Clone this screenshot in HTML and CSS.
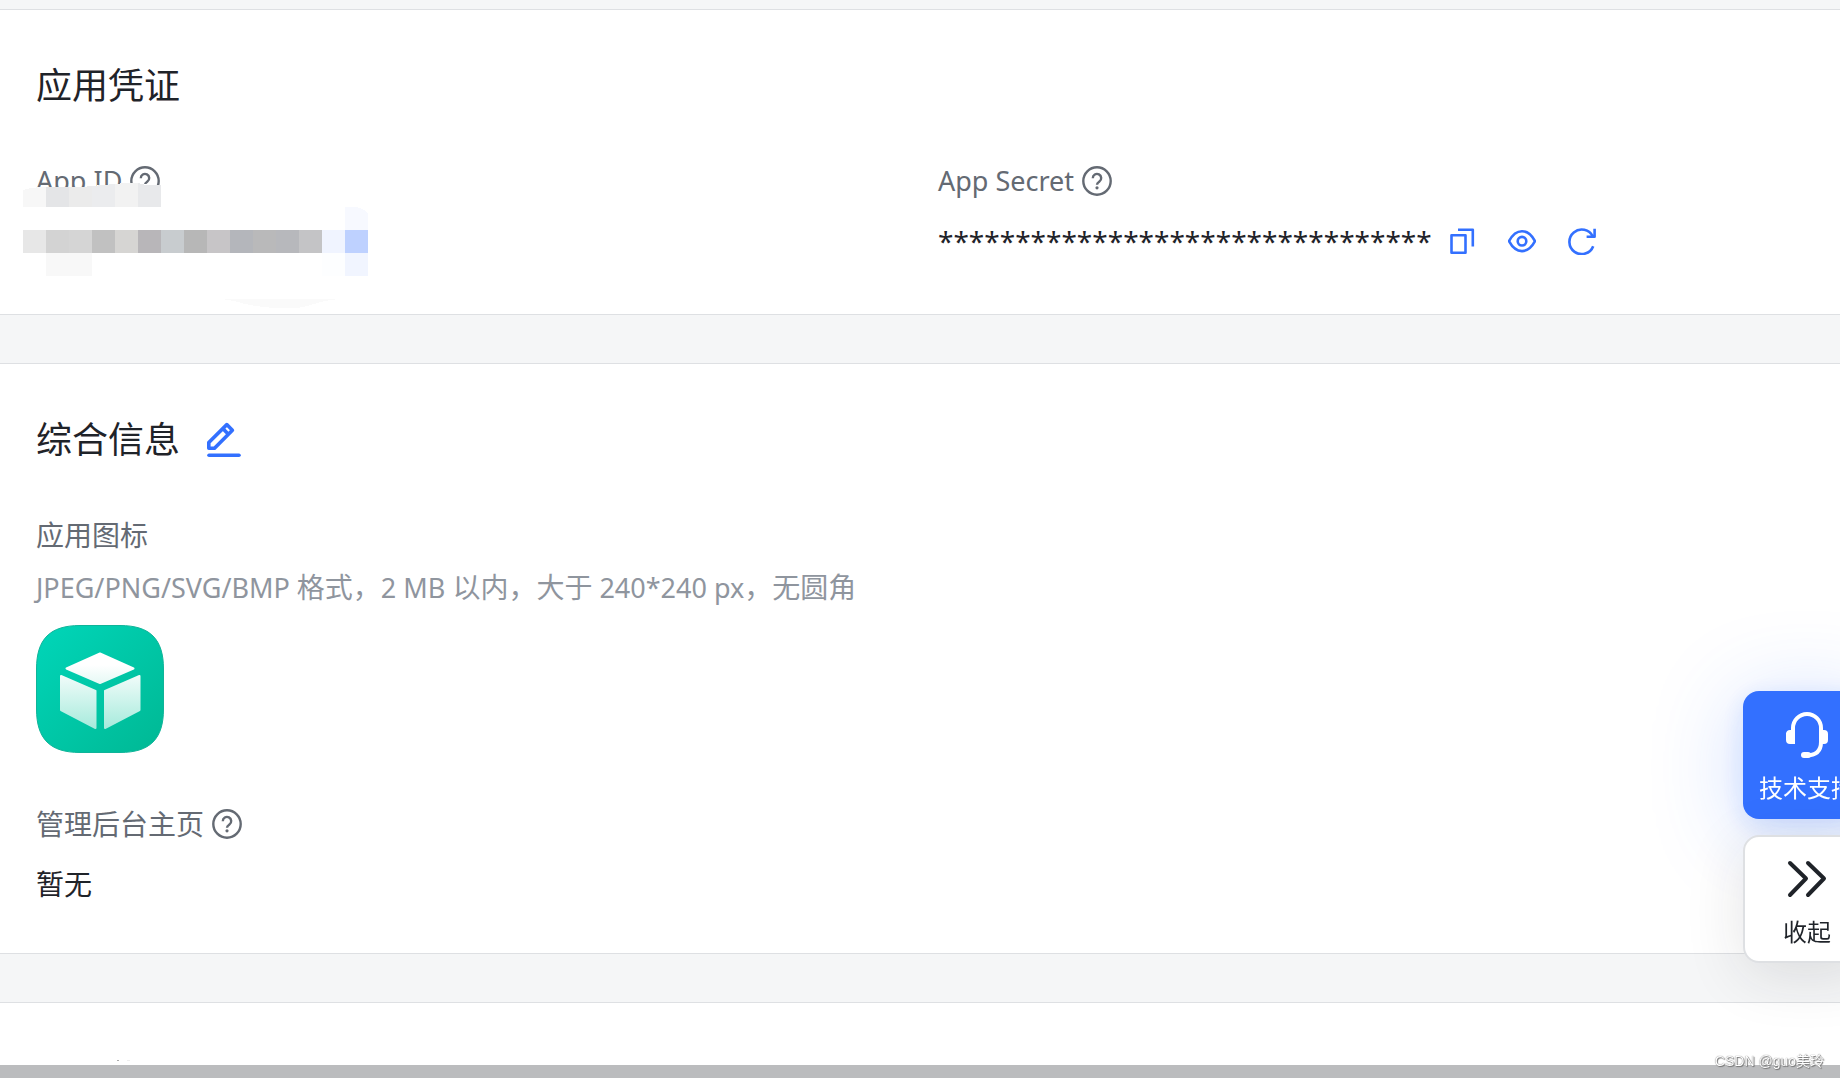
FILE: index.html
```html
<!DOCTYPE html>
<html lang="zh-CN">
<head>
    <meta charset="UTF-8">
    <meta name="viewport" content="width=device-width, initial-scale=1.0">
    <title>应用凭证</title>
    <link rel="stylesheet" href="styles.css">
</head>
<body>
    <svg width="0" height="0" class="sprite" aria-hidden="true">
        <symbol id="icon-help" viewBox="0 0 30 30">
            <circle cx="15" cy="15" r="13.7" fill="none" stroke="currentColor" stroke-width="2.4"/>
            <path d="M10.800 12.200a4.200 4.200 0 1 1 6.600 3.400c-1.500 1-2.400 1.500-2.400 3.200" fill="none" stroke="currentColor" stroke-width="2.400"/>
            <circle cx="15" cy="21.800" r="1.600" fill="currentColor"/>
        </symbol>
    </svg>

    <main class="page">
        <section class="card">
            <h2 class="card-title">应用凭证</h2>
            <div class="columns">
                <div class="field">
                    <div class="label"><span class="latin">App ID</span> <svg class="help"><use href="#icon-help"/></svg></div>
                    <!-- masked id -->
                    <svg class="mosaic" width="345" height="125" viewBox="23 183 345 125" shape-rendering="crispEdges" aria-hidden="true">
                        <path fill="#fff" d="M23 190L46 187H80L115 184 130 183 161 185V222H23z"/>
                        <path fill="#f7f7f7" d="M23 190Q32 187 46 187V207H23z"/>
                        <path fill="#e4e5e7" d="M46 187h23v20H46z"/>
                        <path fill="#ebebeb" d="M69 187h12l11-1v21H69z"/>
                        <path fill="#ebecee" d="M92 186l23-2v23H92z"/>
                        <path fill="#f2f2f2" d="M115 184l10-1h13v24h-23z"/>
                        <path fill="#e8e9eb" d="M138 183l8 2h15v22h-23z"/>
                        <path fill="#f7f9ff" d="M345 207h11q8 1 12 7v16h-23z"/>
                        <path fill="#e7e7e7" d="M23 230h23v23H23z"/>
                        <path fill="#d3d3d3" d="M46 230h23v23H46z"/>
                        <path fill="#d5d5d5" d="M69 230h23v23H69z"/>
                        <path fill="#c1c1c1" d="M92 230h23v23H92z"/>
                        <path fill="#d6d5d3" d="M115 230h23v23h-23z"/>
                        <path fill="#b8b6b9" d="M138 230h23v23h-23z"/>
                        <path fill="#c8cccf" d="M161 230h23v23h-23z"/>
                        <path fill="#b7b7b7" d="M184 230h23v23h-23z"/>
                        <path fill="#c7c5c7" d="M207 230h23v23h-23z"/>
                        <path fill="#b4b6bb" d="M230 230h23v23h-23z"/>
                        <path fill="#b9b9ba" d="M253 230h23v23h-23z"/>
                        <path fill="#b7b8bc" d="M276 230h23v23h-23z"/>
                        <path fill="#c4c4c6" d="M299 230h23v23h-23z"/>
                        <path fill="#f0f4ff" d="M322 230h23v23h-23z"/>
                        <path fill="#bed1ff" d="M345 230h23v23h-23z"/>
                        <path fill="#f8f8f8" d="M46 253h46v23H46z"/>
                        <path fill="#fdfeff" d="M322 253h23v23h-23z"/>
                        <path fill="#f1f5ff" d="M345 253h23v23h-23z"/>
                        <path fill="#fafafa" d="M222 299h118q-15 1-26 5-12 4-20 4h-20q-24-2-36-6-8-2-16-3z"/>
                    </svg>
                </div>
                <div class="field">
                    <div class="label"><span class="latin">App Secret</span> <svg class="help"><use href="#icon-help"/></svg></div>
                    <div class="value secret">
                        <span>********************************</span>
                        <div class="actions">
                            <button type="button" class="icon-btn" aria-label="复制">
                                <svg viewBox="0 0 28 28"><path d="M3.500 8.200h14v17.600h-14zM10 2.800h14.800v16.800" /></svg>
                            </button>
                            <button type="button" class="icon-btn" aria-label="显示">
                                <svg viewBox="0 0 28 28"><path d="M1 14.200C4.500 7.500 9 4.200 14 4.200s9.500 3.300 13 10c-3.500 6.600-8 9.900-13 9.900S4.500 20.800 1 14.200z"/><circle cx="14" cy="14.200" r="4.300"/></svg>
                            </button>
                            <button type="button" class="icon-btn" aria-label="刷新">
                                <svg viewBox="0 0 28 28"><path d="M25.200 19.200A12.300 12.300 0 1 1 24.800 9.500M26.600 1.800v8h-8"/></svg>
                            </button>
                        </div>
                    </div>
                </div>
            </div>
        </section>

        <section class="card">
            <h2 class="card-title">综合信息
                <button type="button" class="icon-btn edit" aria-label="编辑">
                    <svg viewBox="0 0 40 40">
                        <path d="M4.800 22.500L22.800 4.600l5.600 5.600L10.500 28.200H4.800zM18.800 8.600l5.600 5.600" stroke-width="3.600"/>
                        <path d="M5 35.200h30" stroke-width="3.600" stroke-linecap="round"/>
                    </svg>
                </button>
            </h2>
            <div class="label">应用图标</div>
            <p class="hint"><span class="latin">JPEG/PNG/SVG/BMP </span>格式，<span class="latin">2 MB </span>以内，大于<span class="latin"> 240*240 px</span>，无圆角</p>
            <svg class="app-icon" viewBox="0 0 128 128" role="img" aria-label="应用图标">
                <defs>
                    <linearGradient id="green" x1="0" y1="0" x2="1" y2="1">
                        <stop offset="0" stop-color="#00d6b9"/>
                        <stop offset="1" stop-color="#00b894"/>
                    </linearGradient>
                    <linearGradient id="cube" gradientUnits="userSpaceOnUse" x1="0" y1="40" x2="0" y2="105">
                        <stop offset="0" stop-color="#fff"/>
                        <stop offset="1" stop-color="#a4eadb"/>
                    </linearGradient>
                </defs>
                <path d="M44 .5h40C114 .5 127.500 14 127.500 44v40c0 30-13.500 43.500-43.500 43.500H44C14 127.500.5 114 .5 84V44C.5 14 14 .5 44 .5z" fill="url(#green)" stroke="#0fb499"/>
                <g fill="url(#cube)" stroke="url(#cube)" stroke-width="2" stroke-linejoin="round">
                    <path d="M64 28.500L97.500 43.500 64 58 30.500 43.500z"/>
                    <path d="M25 51l34.500 14.800V103L25 85z"/>
                    <path d="M103.500 51L69 65.800V103l34.500-18z"/>
                </g>
            </svg>
            <div class="label home-label">管理后台主页 <svg class="help"><use href="#icon-help"/></svg></div>
            <div class="value">暂无</div>
        </section>

        <section class="card card-last">
            <svg class="speck" width="14" height="1" aria-hidden="true"><path fill="#aaa" d="M0 0h2v1H0z"/><path fill="#eee" d="M10 0h3v1h-3z"/></svg>
        </section>
        <div class="bottom-bar"></div>
    </main>

    <aside class="float">
        <button type="button" class="float-btn primary">
            <svg viewBox="0 0 48 48">
                <path d="M3 23.500a4 4 0 0 1 4-3.500h5v14H7a4 4 0 0 1-4-4zM36 20h5a4 4 0 0 1 4 4v6a4 4 0 0 1-4 4h-5z" fill="currentColor"/>
                <path d="M10 25v-7a14 14 0 0 1 28 0v14q0 13.500-15 13.500" fill="none" stroke="currentColor" stroke-width="4"/>
                <rect x="18" y="42" width="10" height="6" rx="3" fill="currentColor"/>
            </svg>
            <span>技术支持</span>
        </button>
        <button type="button" class="float-btn">
            <svg viewBox="0 0 48 48"><path d="M7 9l16 15.500L7 41M25 9l16 15.500L25 41" fill="none" stroke="currentColor" stroke-width="4" stroke-linecap="round" stroke-linejoin="round"/></svg>
            <span>收起</span>
        </button>
    </aside>
    <div class="watermark">CSDN @guo美玲</div>
</body>
</html>
```
FILE: styles.css
```css
* {
    box-sizing: border-box;
}
body {
    margin: 0;
    background-color: #f5f6f7;
    color: #1f2329;
    font-family: "Noto Sans", "Noto Sans CJK SC", sans-serif;
    font-size: 28px;
    line-height: 40px;
}
.sprite {
    position: absolute;
}
.page {
    display: flex;
    flex-direction: column;
    min-height: 100vh;
    padding-top: 9px;
}
.card {
    position: relative;
    background: #fff;
    border: solid #dee0e3;
    border-width: 1px 0;
    padding: 49px 0 49px 36px;
    margin-bottom: 48px;
}
.card-title {
    display: flex;
    align-items: center;
    gap: 24px;
    margin: 0 0 48px;
    font-size: 36px;
    font-weight: 400;
    line-height: 54px;
}
.columns {
    display: grid;
    grid-template-columns: 1fr 1fr;
    padding-bottom: 2px;
}
.label {
    display: flex;
    align-items: center;
    gap: 8px;
    color: #646a73;
}
.latin {
    font-size: 27px;
    white-space: pre-wrap;
}
.help {
    width: 30px;
    height: 30px;
}
.value {
    margin-top: 20px;
}
.secret {
    display: flex;
    align-items: center;
    gap: 16px;
    height: 44px;
    margin-top: 18px;
}
.actions {
    display: flex;
    gap: 32px;
}
.icon-btn {
    display: block;
    width: 28px;
    height: 28px;
    padding: 0;
    border: none;
    background: none;
    color: #3370ff;
    cursor: pointer;
}
.icon-btn svg {
    display: block;
    width: 100%;
    height: 100%;
    fill: none;
    stroke: currentColor;
    stroke-width: 2.6;
    stroke-linejoin: round;
}
.edit {
    width: 40px;
    height: 40px;
}
.mosaic {
    position: absolute;
    left: 23px;
    top: 173px;
}
.hint {
    margin: 12px 0 17px;
    color: #8f959e;
}
.app-icon {
    display: block;
    width: 128px;
    height: 128px;
}
.home-label {
    margin-top: 51px;
}
.card-last {
    flex: 1;
    margin-bottom: 0;
    border-bottom: none;
    padding: 0;
}
.speck {
    position: absolute;
    left: 117px;
    bottom: 4px;
}
.bottom-bar {
    height: 13px;
    background: #bbbcbe;
}
.float {
    position: fixed;
    right: -31px;
    bottom: 115px;
    display: flex;
    flex-direction: column;
    gap: 16px;
}
.float-btn {
    display: flex;
    flex-direction: column;
    align-items: center;
    justify-content: center;
    gap: 12px;
    width: 128px;
    height: 128px;
    padding: 5px 0 0;
    border: 2px solid #dee0e3;
    border-radius: 16px;
    background: #fff;
    color: #1f2329;
    font-family: inherit;
    font-size: 24px;
    line-height: 36px;
    box-shadow: 0 12px 60px rgba(31, 35, 41, 0.12);
    cursor: pointer;
}
.float-btn svg {
    width: 48px;
    height: 48px;
}
.primary {
    border: none;
    background: #3370ff;
    color: #fff;
    box-shadow: 0 12px 90px rgba(51, 112, 255, 0.25), 0 6px 24px rgba(51, 112, 255, 0.15);
}
.watermark {
    position: fixed;
    right: 16px;
    bottom: 7px;
    color: #fff;
    font-family: "Liberation Sans", "Noto Sans CJK SC", sans-serif;
    font-size: 14px;
    line-height: 20px;
    text-shadow: 0 0 1px #555, 1px 1px 1px #777;
}
```
